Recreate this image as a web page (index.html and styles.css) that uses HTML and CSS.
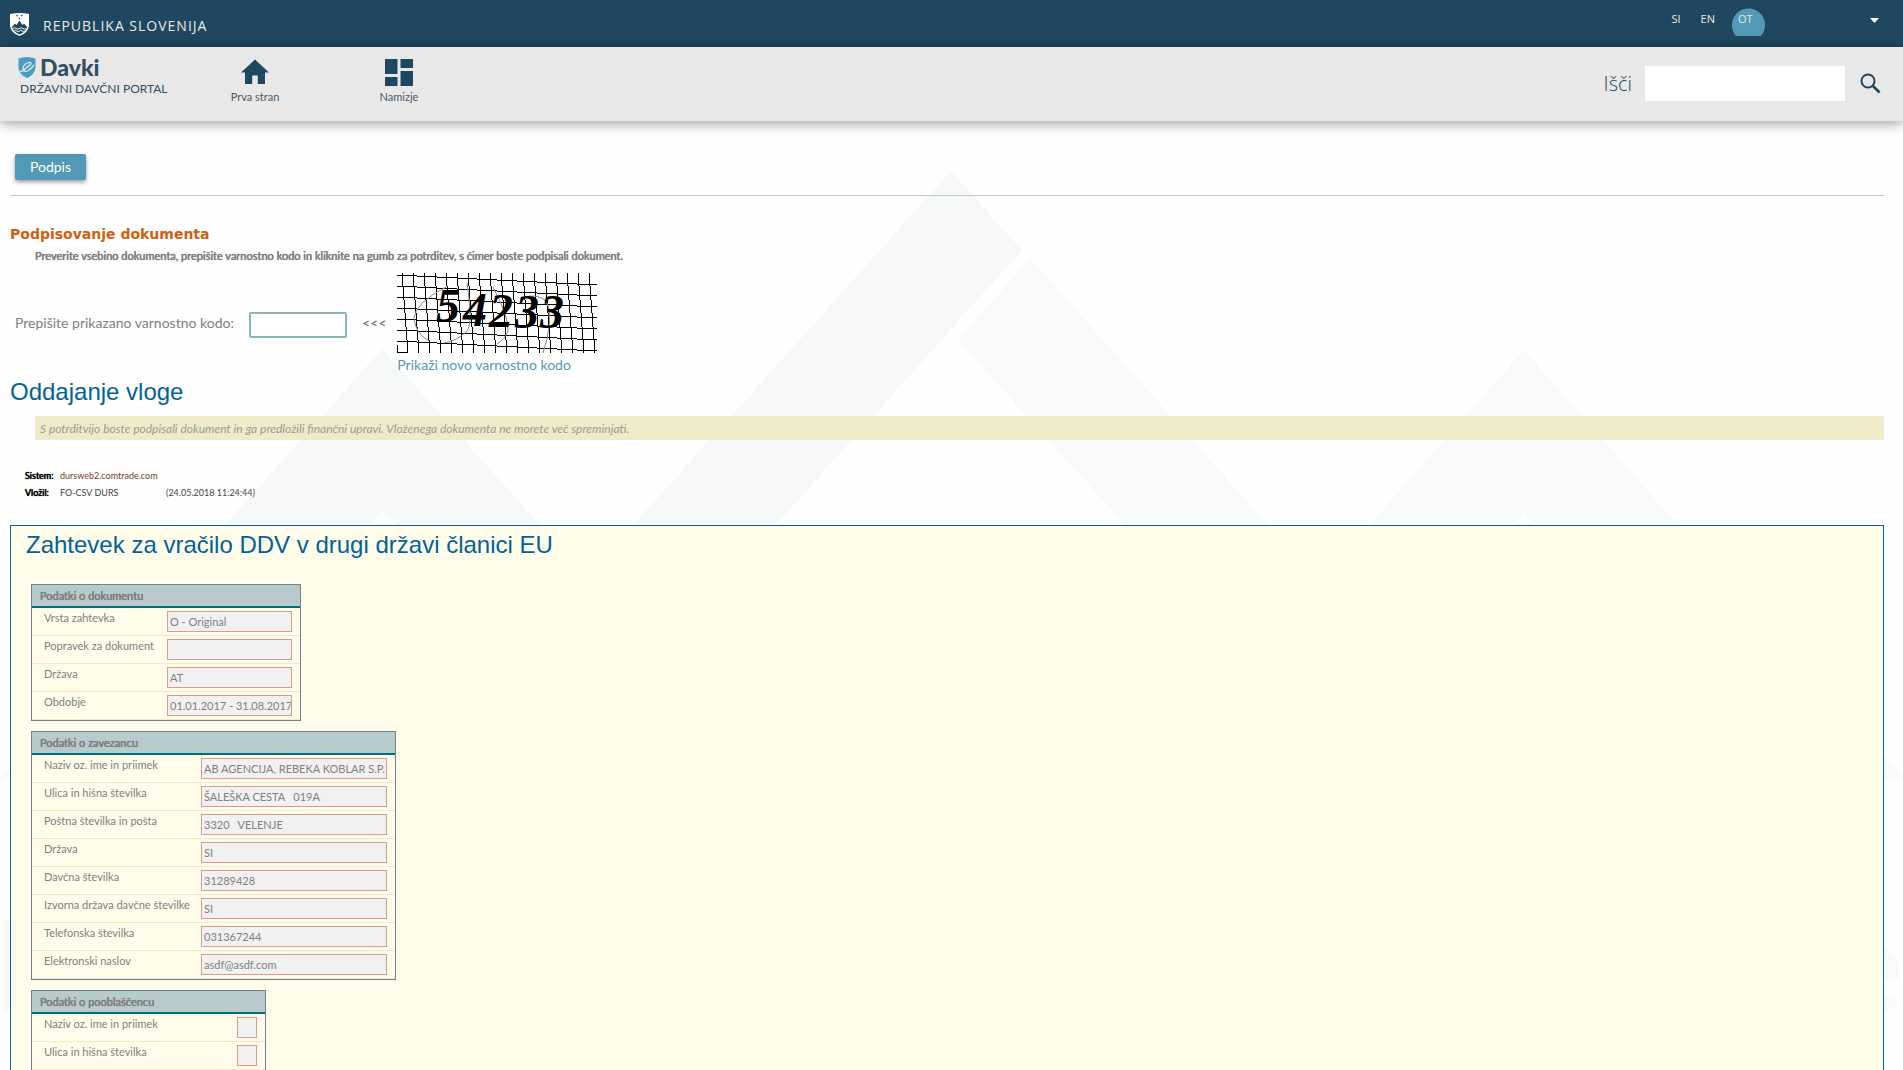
FILE: index.html
```html
<!DOCTYPE html>
<html lang="sl">
<head>
    <meta charset="UTF-8">
    <meta name="viewport" content="width=device-width, initial-scale=1.0">
    <title>eDavki - Podpisovanje dokumenta</title>
    <link rel="stylesheet" href="styles.css">
</head>
<body>
    <svg class="mountains" viewBox="0 0 1903 1070" aria-hidden="true">
        <g fill="#f6f8f8">
            <polygon points="951,171 1022,250 776,525 633,525"/>
            <polygon points="382,349 225,525 371,525 382,511 396,525 540,525"/>
        </g>
        <g fill="#f8faf9">
            <polygon points="1030,258 958,340 1125,525 1268,525"/>
            <polygon points="1524,350 1369,525 1513,525 1524,513 1535,525 1678,525"/>
            <polygon points="1878,750 1908,779 1878,779"/>
            <polygon points="12,765 12,780 0,780"/>
            <rect x="4" y="920" width="12" height="92"/>
            <text x="1834" y="1012" class="mountain-letter">e</text>
        </g>
    </svg>

    <header class="topbar">
        <svg class="crest" viewBox="0 0 19 23" aria-hidden="true">
            <path d="M0 1 Q9.500 -1 19 1 V13 Q18 20 9.500 23 Q1 20 0 13 Z" fill="#fff"/>
            <path d="M2 14 L5 10.500 L6.500 12 L9.500 7.500 L12.500 12 L14 10.500 L17 14 Q16 19 9.500 21.500 Q3 19 2 14 Z" fill="#1f4860"/>
            <path d="M3 15.500 q1.600 -1.500 3.200 0 t3.300 0 t3.300 0 t3.200 0 M4 18 q1.400 -1.500 2.800 0 t2.700 0 t2.800 0 t2.700 0" stroke="#fff" fill="none"/>
            <circle cx="7" cy="2.600" r="0.800" fill="#1f4860"/>
            <circle cx="12" cy="2.600" r="0.800" fill="#1f4860"/>
            <circle cx="9.500" cy="5.600" r="0.800" fill="#1f4860"/>
        </svg>
        <span class="republic">REPUBLIKA SLOVENIJA</span>
        <nav class="languages">
            <a href="#">SI</a>
            <a href="#">EN</a>
            <a href="#" class="active">OT</a>
        </nav>
        <button class="user-menu" aria-label="Uporabnik"></button>
    </header>

    <div class="navbar">
        <a href="#" class="brand">
            <span class="brand-name">
                <svg class="brand-shield" viewBox="0 0 18 21" aria-hidden="true">
                    <path d="M0.500 1.500 Q9 -1.500 17.500 1.500 V11 Q16.500 18 9 21 Q1.500 18 0.500 11 Z" fill="#4a9dbe"/>
                    <path d="M2 14 Q4 15 7 12 L12.500 7.500 Q14 5 10.500 5.500 Q5.500 7 5 11.500 Q5 15.500 9.500 14 Q13 12 16 8" fill="none" stroke="#e8e8e8" stroke-width="1.300"/>
                </svg>
                Davki
            </span>
            <span class="brand-sub">DRŽAVNI DAVČNI PORTAL</span>
        </a>
        <nav class="main-nav">
            <a href="#">
                <svg viewBox="0 0 28 28" aria-hidden="true">
                    <path d="M11.200 25 V16.500 H16.800 V25 H24 V13.500 H28 L14 0.500 L0 13.500 H4 V25 Z"/>
                </svg>
                Prva stran
            </a>
            <a href="#">
                <svg viewBox="0 0 28 28" aria-hidden="true">
                    <path d="M0 0 H12.500 V15 H0 Z M15.500 0 H28 V9 H15.500 Z M0 18 H12.500 V27 H0 Z M15.500 12 H28 V27 H15.500 Z"/>
                </svg>
                Namizje
            </a>
        </nav>
        <form class="search">
            <label for="search">Išči</label>
            <input type="text" id="search">
            <button type="button" aria-label="Išči">
                <svg viewBox="0 0 21 21" aria-hidden="true">
                    <circle cx="8" cy="8" r="6.500" fill="none" stroke="#1f4860" stroke-width="2"/>
                    <path d="M12.500 12.500 L19.500 19.500" stroke="#1f4860" stroke-width="2.600"/>
                </svg>
            </button>
        </form>
    </div>

    <main>
        <div class="actions">
            <button class="sign">Podpis</button>
        </div>

        <h2 class="sign-title">Podpisovanje dokumenta</h2>
        <p class="instructions">Preverite vsebino dokumenta, prepišite varnostno kodo in kliknite na gumb za potrditev, s čimer boste podpisali dokument.</p>

        <div class="captcha">
            <label for="code">Prepišite prikazano varnostno kodo:</label>
            <input type="text" id="code" autofocus>
            <span class="arrows">&lt;&lt;&lt;</span>
            <div class="captcha-picture">
                <svg viewBox="0 0 200 80" role="img" aria-label="Varnostna koda">
                    <path class="grid" d="M0 2 L200 12 M0 13 L200 23 M0 24 L200 34 M0 35 L200 45 M0 46 L200 56 M0 57 L200 67 M0 68 L200 78 M0 79.500 H11
                        M0.500 72 V80 M5 0 L11 80 M16 0 L22 80 M27 0 L33 80 M38 0 L44 80 M49 0 L55 80 M60 0 L66 80 M71 0 L77 80 M82 0 L88 80 M93 0 L99 80 M104 0 L110 80 M115 0 L121 80 M126 0 L132 80 M137 0 L143 80 M148 0 L154 80 M159 0 L165 80 M170 0 L176 80 M181 0 L187 80 M192 0 L198 80"/>
                    <path class="noise" d="M49 14 Q18 30 17 45 Q18 60 32 68 M70 10 Q76 50 70 58 Q60 68 47 70 M96 14 Q112 44 111 58 Q108 66 100 71 M132 23 Q150 22 152 36 Q154 50 150 66 L146 80"/>
                    <g class="digits">
                        <text x="39" y="49">5</text>
                        <text x="66" y="53">4</text>
                        <text x="92" y="54">2</text>
                        <text x="118" y="55">3</text>
                        <text x="143" y="55">3</text>
                    </g>
                </svg>
                <a href="#">Prikaži novo varnostno kodo</a>
            </div>
        </div>

        <h1>Oddajanje vloge</h1>
        <p class="notice">S potrditvijo boste podpisali dokument in ga predložili finančni upravi. Vloženega dokumenta ne morete več spreminjati.</p>

        <dl class="meta">
            <dt>Sistem:</dt>
            <dd class="host">dursweb2.comtrade.com</dd>
            <dt>Vložil:</dt>
            <dd>FO-CSV DURS</dd>
            <dd>(24.05.2018 11:24:44)</dd>
        </dl>

        <section class="document">
            <h1>Zahtevek za vračilo DDV v drugi državi članici EU</h1>

            <table class="data document-data">
                <thead>
                    <tr><th colspan="2">Podatki o dokumentu</th></tr>
                </thead>
                <tbody>
                    <tr><td><label for="type">Vrsta zahtevka</label></td><td><input id="type" value="O - Original" readonly></td></tr>
                    <tr><td><label for="correction">Popravek za dokument</label></td><td><input id="correction" readonly></td></tr>
                    <tr><td><label for="country">Država</label></td><td><input id="country" value="AT" readonly></td></tr>
                    <tr><td><label for="period">Obdobje</label></td><td><input id="period" value="01.01.2017 - 31.08.2017" readonly></td></tr>
                </tbody>
            </table>

            <table class="data taxpayer-data">
                <thead>
                    <tr><th colspan="2">Podatki o zavezancu</th></tr>
                </thead>
                <tbody>
                    <tr><td><label for="name">Naziv oz. ime in priimek</label></td><td><input id="name" value="AB AGENCIJA, REBEKA KOBLAR S.P." readonly></td></tr>
                    <tr><td><label for="street">Ulica in hišna številka</label></td><td><input id="street" value="ŠALEŠKA CESTA   019A" readonly></td></tr>
                    <tr><td><label for="post">Poštna številka in pošta</label></td><td><input id="post" value="3320   VELENJE" readonly></td></tr>
                    <tr><td><label for="state">Država</label></td><td><input id="state" value="SI" readonly></td></tr>
                    <tr><td><label for="tax">Davčna številka</label></td><td><input id="tax" value="31289428" readonly></td></tr>
                    <tr><td><label for="origin">Izvorna država davčne številke</label></td><td><input id="origin" value="SI" readonly></td></tr>
                    <tr><td><label for="phone">Telefonska številka</label></td><td><input id="phone" value="031367244" readonly></td></tr>
                    <tr><td><label for="email">Elektronski naslov</label></td><td><input id="email" value="asdf@asdf.com" readonly></td></tr>
                </tbody>
            </table>

            <table class="data agent-data">
                <thead>
                    <tr><th colspan="2">Podatki o pooblaščencu</th></tr>
                </thead>
                <tbody>
                    <tr><td><label for="agent-name">Naziv oz. ime in priimek</label></td><td><input id="agent-name" readonly></td></tr>
                    <tr><td><label for="agent-street">Ulica in hišna številka</label></td><td><input id="agent-street" readonly></td></tr>
                </tbody>
            </table>
        </section>
    </main>
</body>
</html>
```
FILE: styles.css
```css
* {
    box-sizing: border-box;
}
body {
    position: relative;
    height: 100vh;
    margin: 0;
    overflow: hidden;
    background-color: #fefefe;
    color: #808080;
    font-family: Lato, sans-serif;
    font-size: 11px;
}
a {
    text-decoration: none;
}
h1, h2, p, dl, dd {
    margin: 0;
}
h1 {
    color: #00629b;
    font-family: "Liberation Sans", Arial, sans-serif;
    font-size: 24px;
    font-weight: normal;
    line-height: 28px;
}
.mountains {
    position: absolute;
    top: 0;
    left: 0;
    width: 100%;
    z-index: -1;
}
.mountain-letter {
    font-size: 130px;
    font-weight: bold;
}

/* Top bar */
.topbar {
    display: flex;
    align-items: flex-start;
    height: 47px;
    padding: 0 24px 0 10px;
    background-color: #1f4860;
    color: #e8e8e8;
    font-family: "Open Sans", sans-serif;
}
.crest {
    width: 19px;
    height: 23px;
    margin-top: 13px;
}
.republic {
    margin: 16px 0 0 14px;
    font-size: 14px;
    line-height: 20px;
    letter-spacing: 1px;
}
.languages {
    display: flex;
    gap: 14px;
    margin-left: auto;
    padding-top: 8px;
}
.languages a {
    height: 28px;
    color: #e8e8e8;
    line-height: 22px;
    padding: 0 3px;
}
.languages .active {
    width: 33px;
    padding-left: 6px;
    background: radial-gradient(circle at 50% 17px, #5199b4 16px, transparent 17px);
}
.user-menu {
    width: 9px;
    height: 5px;
    margin: 18px 0 0 105px;
    padding: 0;
    border: 0;
    background-color: #fff;
    clip-path: polygon(0 0, 100% 0, 50% 100%);
}

/* Navigation */
.navbar {
    display: flex;
    height: 74px;
    padding-left: 18px;
    background-color: #e8e8e8;
    box-shadow: 0 2px 12px rgba(0, 0, 0, 0.4);
}
.brand {
    width: 165px;
    padding-top: 6px;
    color: #334f62;
}
.brand-name {
    display: flex;
    gap: 4px;
    align-items: center;
    font-size: 23px;
    font-weight: 900;
    line-height: 28px;
}
.brand-shield {
    width: 18px;
    height: 21px;
}
.brand-sub {
    display: block;
    padding-left: 2px;
    font-size: 12px;
    line-height: 16px;
}
.main-nav {
    display: flex;
}
.main-nav a {
    display: flex;
    flex-direction: column;
    align-items: center;
    gap: 3px;
    width: 144px;
    padding-top: 12px;
    color: #4a5a68;
    line-height: 14px;
}
.main-nav svg {
    width: 28px;
    height: 28px;
    fill: #1f4860;
}
.search {
    display: flex;
    align-items: center;
    height: 35px;
    margin: 19px 22px 0 auto;
}
.search label {
    color: #1f4860;
    font-family: "Open Sans", sans-serif;
    font-size: 20px;
    font-weight: 300;
}
.search input {
    width: 200px;
    height: 35px;
    margin: 0 15px 0 13px;
    border: 0;
    background-color: #fff;
}
.search button {
    width: 21px;
    height: 21px;
    padding: 0;
    border: 0;
    background: none;
}

/* Signing */
main {
    padding: 0 19px 0 10px;
}
.actions {
    height: 75px;
    padding: 33px 5px 0;
    border-bottom: 1px solid #c3c8c9;
}
.sign {
    display: block;
    width: 71px;
    height: 26px;
    padding: 0 0 1px;
    border: 0;
    border-radius: 2px;
    background-color: #5199b4;
    box-shadow: 0 2px 4px rgba(0, 0, 0, 0.4);
    color: #fff;
    font-family: Lato, sans-serif;
    font-size: 14px;
}
.sign-title {
    margin-top: 29px;
    color: #d06010;
    font-family: "DejaVu Sans", Verdana, sans-serif;
    font-size: 14px;
    line-height: 18px;
}
.instructions {
    margin: 5px 0 9px;
    padding-left: 25px;
    line-height: 16px;
}
.instructions, .meta dt, .data th {
    font-weight: normal;
    text-shadow: 0 0 1px currentColor, 0 0 0 currentColor;
}
.captcha {
    display: flex;
    align-items: center;
    margin-bottom: 2px;
    padding-left: 5px;
    font-size: 14px;
}
.captcha label {
    padding-bottom: 4px;
}
.captcha input {
    width: 98px;
    height: 26px;
    margin: 0 15px;
    padding: 0 4px;
    border: 2px solid #8ab5b5;
    border-radius: 2px;
    background-color: #fff;
    outline: none;
}
.arrows {
    margin-right: 11px;
    padding-bottom: 4px;
    font-weight: bold;
}
.captcha-picture svg {
    display: block;
    width: 200px;
    height: 80px;
    background-color: #fff;
}
.captcha-picture a {
    display: block;
    color: #5199b4;
    line-height: 23px;
}
.grid {
    stroke: #000;
    shape-rendering: crispEdges;
}
.noise {
    fill: none;
    stroke: #888;
}
.digits {
    font-family: "Liberation Serif", serif;
    font-size: 48px;
    font-style: italic;
    font-weight: bold;
}
.notice {
    margin: 10px 0 0 25px;
    padding: 5px 5px 3px;
    background-color: #efebc9;
    color: #999;
    font-size: 12px;
    font-style: italic;
    line-height: 16px;
}

/* Document */
.meta {
    display: grid;
    grid-template-columns: 35px 106px auto;
    justify-content: start;
    padding: 27px 15px 24px;
    color: #444;
    font-size: 9px;
    line-height: 17px;
}
.meta dt {
    color: #000;
}
.meta .host {
    grid-column: span 2;
    color: #703c2c;
}
.document {
    padding: 5px 20px;
    border: 1px solid #00629b;
    background-color: #fffde9;
}
.document h1 {
    margin: 0 0 25px -5px;
}
.data {
    margin-bottom: 10px;
    border: 1px solid #708090;
    border-spacing: 0;
}
.document-data {
    width: 270px;
}
.taxpayer-data {
    width: 365px;
}
.agent-data {
    width: 235px;
}
.data th {
    height: 23px;
    padding: 0 8px;
    border-bottom: 2px solid #007078;
    background-color: #b8cbcc;
    text-align: left;
}
.data td {
    height: 28px;
    padding: 3px 0;
    border-bottom: 1px solid #efebc9;
    line-height: 14px;
    vertical-align: top;
}
.data td:first-child {
    padding-left: 12px;
}
.data td:last-child {
    padding-right: 8px;
    text-align: right;
}
.data label {
    white-space: nowrap;
}
.data input {
    width: 125px;
    height: 21px;
    padding: 0 0 1px 2px;
    border: 1px solid #dd9990;
    background-color: #f1f1f1;
    color: #808080;
    font-family: Lato, sans-serif;
    font-size: 11px;
    vertical-align: top;
}
.taxpayer-data input {
    width: 186px;
}
.agent-data input {
    width: 20px;
}
```
